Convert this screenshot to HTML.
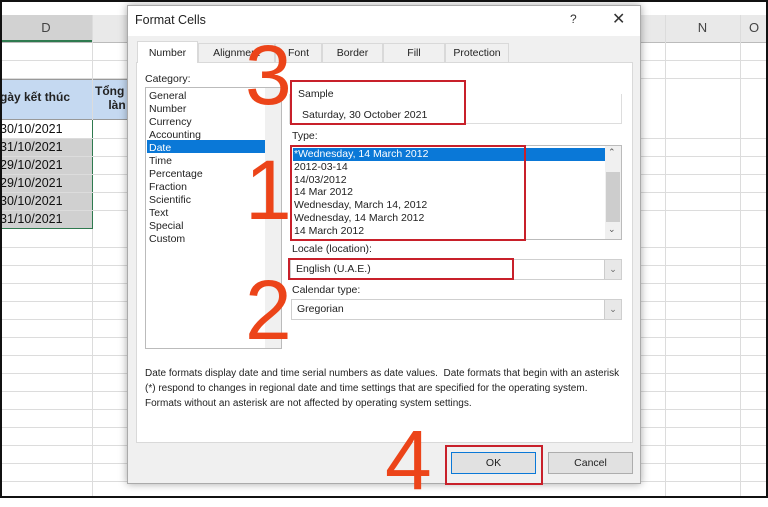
<!DOCTYPE html>
<html><head><meta charset="utf-8"><style>
*{margin:0;padding:0;box-sizing:border-box}
body{width:768px;height:498px;overflow:hidden;background:#fff;font-family:"Liberation Sans",sans-serif;position:relative;font-size:11px;color:#222}
.a{position:absolute}
.hl{position:absolute;height:1px;background:#dcdcdc;left:0;width:768px}
.vl{position:absolute;width:1px;background:#dcdcdc;top:15px;height:483px}
.num{position:absolute;color:#ec4419;font-size:84px;line-height:1;font-family:"Liberation Sans",sans-serif}
.rb{position:absolute;border:2px solid #c8202a}
.li{position:absolute;left:3px;font-size:10.5px;line-height:13px}
.tab{position:absolute;top:43px;height:19px;border:1px solid #d9d9d9;border-bottom:none;background:#f0f0f0;font-size:10.5px;text-align:center;line-height:18px}
.cmb{position:absolute;background:#fff;border:1px solid #cfcfcf;height:21px;font-size:10.5px;line-height:19px;padding-left:5px}
.dd{position:absolute;right:0;top:0;width:17px;height:19px;background:#e8e8e8;border-left:1px solid #ccc;text-align:center;color:#666;font-size:9px}
</style></head><body>
<div class="a" style="left:0;top:15px;width:768px;height:27px;background:#e9e9e9"></div>
<div class="a" style="left:0;top:15px;width:92px;height:27px;background:#d2d2d2;border-bottom:2px solid #2f7a4f;text-align:center;line-height:26px;font-size:13px;color:#444">D</div>
<div class="a" style="left:665px;top:15px;width:75px;height:27px;text-align:center;line-height:26px;font-size:13px;color:#444">N</div>
<div class="a" style="left:740px;top:15px;width:28px;height:27px;text-align:center;line-height:26px;font-size:13px;color:#444">O</div>
<div class="hl" style="top:42px;background:#bbb"></div>
<div class="hl" style="top:60px"></div><div class="hl" style="top:78px"></div>
<div class="a" style="left:0;top:79px;width:128px;height:41px;background:#c5d9f1;border:1px solid #999;border-left:none"></div>
<div class="a" style="left:0;top:90px;font-size:12px;font-weight:bold;color:#222">gày kết thúc</div>
<div class="a" style="left:95px;top:84px;font-size:12px;font-weight:bold;color:#222">Tổng<br>&nbsp;&nbsp;&nbsp;&nbsp;làn</div>
<div class="vl" style="left:92px"></div>
<div class="a" style="left:0;top:120px;width:93px;height:18px;background:#fff"></div>
<div class="a" style="left:0;top:138px;width:93px;height:90px;background:#d0d0d0"></div>
<div class="a" style="left:0;top:120px;font-size:12.5px;line-height:18px;color:#111">30/10/2021<br>31/10/2021<br>29/10/2021<br>29/10/2021<br>30/10/2021<br>31/10/2021</div>
<div class="a" style="left:92px;top:120px;width:1px;height:108px;background:#2f7a4f"></div>
<div class="a" style="left:0;top:228px;width:93px;height:1px;background:#2f7a4f"></div>
<div class="hl" style="top:138px"></div><div class="hl" style="top:156px"></div><div class="hl" style="top:174px"></div><div class="hl" style="top:192px"></div><div class="hl" style="top:210px"></div>
<div class="hl" style="top:247px"></div><div class="hl" style="top:265px"></div><div class="hl" style="top:283px"></div><div class="hl" style="top:301px"></div><div class="hl" style="top:319px"></div><div class="hl" style="top:337px"></div><div class="hl" style="top:355px"></div><div class="hl" style="top:373px"></div><div class="hl" style="top:391px"></div><div class="hl" style="top:409px"></div><div class="hl" style="top:427px"></div><div class="hl" style="top:445px"></div><div class="hl" style="top:463px"></div><div class="hl" style="top:481px"></div>
<div class="vl" style="left:665px"></div><div class="vl" style="left:740px"></div>
<div class="a" style="left:127px;top:5px;width:514px;height:479px;background:#f0f0f0;border:1px solid #aaa;box-shadow:0 0 8px rgba(0,0,0,.35)"></div>
<div class="a" style="left:128px;top:6px;width:512px;height:30px;background:#fff"></div>
<div class="a" style="left:135px;top:13px;font-size:12.5px;color:#222">Format Cells</div>
<div class="a" style="left:570px;top:12px;font-size:12px;color:#333">?</div>
<div class="a" style="left:612px;top:9px;font-size:16px;color:#333">✕</div>
<div class="a" style="left:136px;top:62px;width:497px;height:381px;background:#fff;border:1px solid #d9d9d9"></div>
<div class="tab" style="left:137px;top:41px;width:61px;height:22px;background:#fff;line-height:22px">Number</div>
<div class="tab" style="left:198px;width:77px">Alignment</div>
<div class="tab" style="left:275px;width:47px">Font</div>
<div class="tab" style="left:322px;width:61px">Border</div>
<div class="tab" style="left:383px;width:62px">Fill</div>
<div class="tab" style="left:445px;width:64px">Protection</div>
<div class="a" style="left:145px;top:73px;font-size:10.5px">Category:</div>
<div class="a" style="left:145px;top:87px;width:137px;height:262px;border:1px solid #bbb;background:#fff">
<div class="a" style="right:0;top:0;width:16px;height:260px;background:#f0f0f0"></div>
<div class="a" style="left:1px;top:52px;width:118px;height:13px;background:#0a78d7"></div>
<div class="li" style="top:2px">General<br>Number<br>Currency<br>Accounting<br><span style="color:#fff">Date</span><br>Time<br>Percentage<br>Fraction<br>Scientific<br>Text<br>Special<br>Custom</div>
</div>
<div class="a" style="left:289px;top:94px;width:333px;height:30px;border:1px solid #ddd;border-top:none"></div>
<div class="a" style="left:298px;top:88px;font-size:10.5px">Sample</div>
<div class="a" style="left:302px;top:109px;font-size:10.5px">Saturday, 30 October 2021</div>
<div class="a" style="left:292px;top:130px;font-size:10.5px">Type:</div>
<div class="a" style="left:290px;top:145px;width:332px;height:95px;border:1px solid #bbb;background:#fff">
<div class="a" style="left:2px;top:2px;width:313px;height:13px;background:#0a78d7"></div>
<div class="a" style="right:0;top:0;width:16px;height:93px;background:#f0f0f0"><div class="a" style="left:1px;top:26px;width:14px;height:50px;background:#cdcdcd"></div><div class="a" style="left:3px;top:1px;font-size:9px;color:#555">⌃</div><div class="a" style="left:3px;top:78px;font-size:9px;color:#555">⌄</div></div>
<div class="li" style="top:2px;line-height:12.8px"><span style="color:#fff">*Wednesday, 14 March 2012</span><br>2012-03-14<br>14/03/2012<br>14 Mar 2012<br>Wednesday, March 14, 2012<br>Wednesday, 14 March 2012<br>14 March 2012</div>
</div>
<div class="a" style="left:292px;top:243px;font-size:10.5px">Locale (location):</div>
<div class="cmb" style="left:290px;top:259px;width:332px">English (U.A.E.)<div class="dd">⌄</div></div>
<div class="a" style="left:292px;top:284px;font-size:10.5px">Calendar type:</div>
<div class="cmb" style="left:291px;top:299px;width:331px">Gregorian<div class="dd">⌄</div></div>
<div class="a" style="left:145px;top:366px;font-size:10px;line-height:15px;color:#222">Date formats display date and time serial numbers as date values.&nbsp; Date formats that begin with an asterisk<br>(*) respond to changes in regional date and time settings that are specified for the operating system.<br>Formats without an asterisk are not affected by operating system settings.</div>
<div class="a" style="left:451px;top:452px;width:85px;height:22px;background:#e1e1e1;border:1px solid #0a78d7;text-align:center;line-height:20px;font-size:10.5px">OK</div>
<div class="a" style="left:548px;top:452px;width:85px;height:22px;background:#e1e1e1;border:1px solid #adadad;text-align:center;line-height:20px;font-size:10.5px">Cancel</div>
<div class="rb" style="left:290px;top:80px;width:176px;height:45px"></div>
<div class="rb" style="left:290px;top:145px;width:236px;height:96px"></div>
<div class="rb" style="left:288px;top:258px;width:226px;height:22px"></div>
<div class="rb" style="left:445px;top:445px;width:98px;height:40px"></div>
<div class="num" style="left:245px;top:33px">3</div>
<div class="num" style="left:245px;top:148px">1</div>
<div class="num" style="left:245px;top:268px">2</div>
<div class="num" style="left:385px;top:418px">4</div>
<div class="a" style="left:0;top:0;width:768px;height:498px;border:2px solid #111"></div>
</body></html>
